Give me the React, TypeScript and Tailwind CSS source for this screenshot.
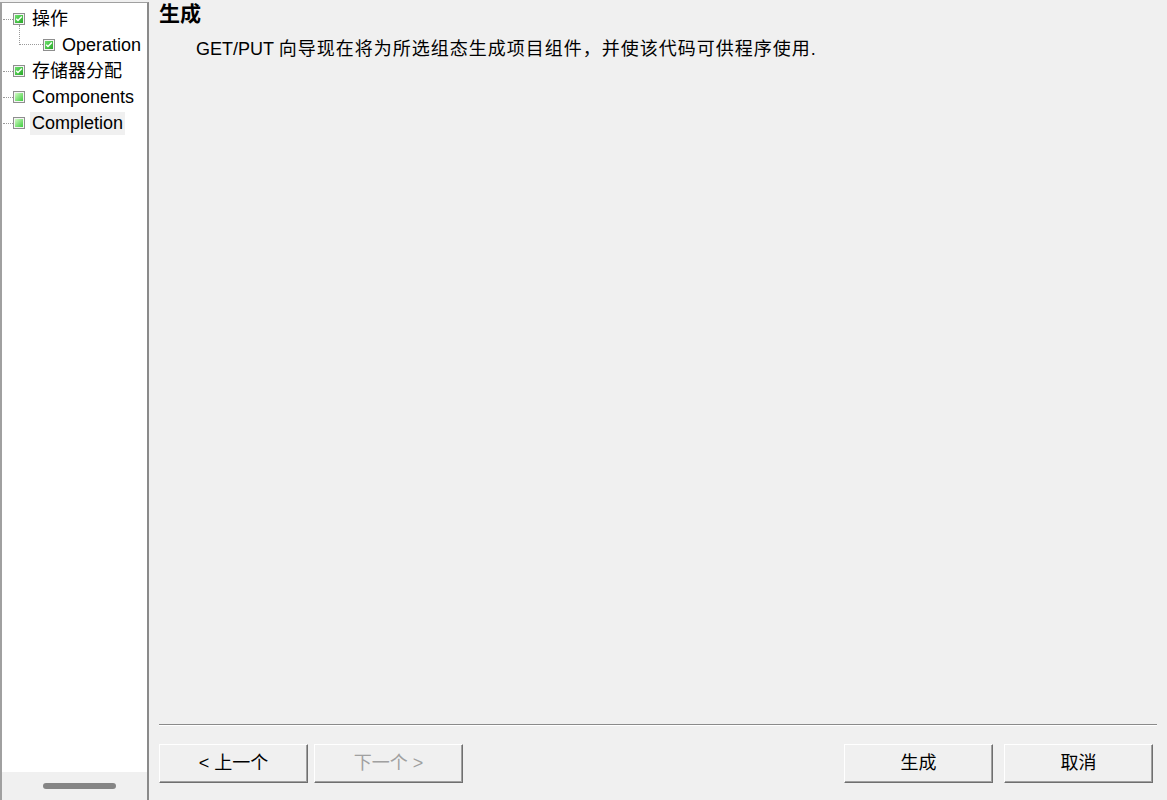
import React from "react";

const font = "font-['Liberation_Sans','Noto_Sans_CJK_SC',sans-serif]";

// small tree checkbox, green fill, with optional tick
const Box = ({ checked }: { checked: boolean }) => (
  <svg width="12" height="12" viewBox="0 0 12 12" className="shrink-0">
    <defs>
      <linearGradient id={checked ? "gc" : "gu"} x1="0" y1="0" x2="1" y2="1">
        <stop offset="0" stopColor={checked ? "#6ee06e" : "#d2fbc4"} />
        <stop offset="1" stopColor={checked ? "#28a828" : "#3fcc3f"} />
      </linearGradient>
    </defs>
    <rect x="0.5" y="0.5" width="11" height="11" fill="#f4f4f4" stroke="#8e8e8e" />
    <rect x="2" y="2" width="8" height="8" fill={`url(#${checked ? "gc" : "gu"})`} />
    {checked && <path d="M3.2 5.8 L5 7.6 L8.8 3.6" stroke="#fff" strokeWidth="1.4" fill="none" />}
  </svg>
);

const Row = ({
  label,
  checked,
  active,
}: {
  label: string;
  checked: boolean;
  active?: boolean;
}) => (
  <div className="flex h-[26px] items-center">
    <span className="ml-[1px] w-[10px] border-t border-dotted border-[#9a9a9a]" />
    <Box checked={checked} />
    <span
      className={`ml-[5px] px-[2px] leading-[23px] text-[18px] text-black ${
        active ? "bg-[#f0f0f0]" : ""
      }`}
    >
      {label}
    </span>
  </div>
);

const Btn = ({
  children,
  disabled,
  className = "",
}: {
  children: React.ReactNode;
  disabled?: boolean;
  className?: string;
}) => (
  <button
    className={`h-[39px] w-[149px] border border-t-white border-l-white border-r-[#6f6f6f] border-b-[#6f6f6f] bg-[#f0f0f0] text-[18px] shadow-[inset_-1px_-1px_0_#a0a0a0] ${
      disabled ? "text-[#a0a0a0]" : "text-black"
    } ${className}`}
  >
    {children}
  </button>
);

export default function App() {
  return (
    <div className={`flex h-[800px] w-[1167px] overflow-hidden bg-[#f0f0f0] ${font}`}>
      {/* left tree panel */}
      <div className="mt-[2px] flex w-[149px] shrink-0 flex-col border-l-2 border-t border-r-2 border-l-[#a0a0a0] border-t-[#a0a0a0] border-r-[#8a8a8a]">
        <div className="flex-1 bg-white pt-[3px]">
          <Row label="操作" checked />
          <div className="flex h-[26px] items-center">
            <span className="mb-[13px] ml-[17px] h-[20px] w-[24px] self-end border-b border-l border-dotted border-[#9a9a9a]" />
            <Box checked />
            <span className="ml-[7px] text-[18px] text-black">Operation</span>
          </div>
          <Row label="存储器分配" checked />
          <Row label="Components" checked={false} />
          <Row label="Completion" checked={false} active />
        </div>
        <div className="flex h-[28px] items-center bg-[#f0f0f0] pl-[41px]">
          <div className="h-[6px] w-[73px] rounded-full bg-[#858585]" />
        </div>
      </div>

      {/* main area */}
      <div className="flex flex-1 flex-col pl-[10px] pr-[10px]">
        <h1 className="mt-[2px] text-[21px] font-bold leading-[24px] text-black">生成</h1>
        <p className="mt-[11px] pl-[37px] text-[18px] leading-[24px] text-black">
          GET/PUT <span className="tracking-[1px]">向导现在将为所选组态生成项目组件，并使该代码可供程序使用.</span>
        </p>
        <div className="flex-1" />
        <div className="border-t border-b border-t-[#8a8a8a] border-b-white" />
        <div className="mb-[17px] mt-[18px] flex items-center gap-[6px] pr-[4px]">
          <Btn>&lt; 上一个</Btn>
          <Btn disabled>下一个 &gt;</Btn>
          <div className="flex-1" />
          <Btn>生成</Btn>
          <Btn className="ml-[5px]">取消</Btn>
        </div>
      </div>
    </div>
  );
}
